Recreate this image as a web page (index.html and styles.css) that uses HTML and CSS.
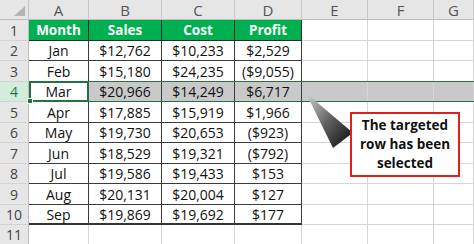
FILE: index.html
```html
<!DOCTYPE html>
<html>
<head>
<meta charset="utf-8">
<link rel="stylesheet" href="styles.css">
</head>
<body>
<div class="page">
  <div class="sheet">
    <div class="corner"><span class="tri"></span></div>
    <div class="ch">A</div><div class="ch">B</div><div class="ch">C</div><div class="ch">D</div><div class="ch">E</div><div class="ch">F</div><div class="ch">G</div>

    <div class="rh">1</div>
    <div class="g">Month</div><div class="g">Sales</div><div class="g">Cost</div><div class="g">Profit</div>
    <div class="e"></div><div class="e"></div><div class="e"></div>

    <div class="rh">2</div>
    <div class="t">Jan</div><div class="t">$12,762</div><div class="t">$10,233</div><div class="t">$2,529</div>
    <div class="e"></div><div class="e"></div><div class="e"></div>

    <div class="rh">3</div>
    <div class="t">Feb</div><div class="t">$15,180</div><div class="t">$24,235</div><div class="t">($9,055)</div>
    <div class="e"></div><div class="e"></div><div class="e"></div>

    <div class="rh rh-sel">4</div>
    <div class="t">Mar</div><div class="t sel">$20,966</div><div class="t sel">$14,249</div><div class="t sel">$6,717</div>
    <div class="e sel"></div><div class="e sel"></div><div class="e sel"></div>

    <div class="rh">5</div>
    <div class="t">Apr</div><div class="t">$17,885</div><div class="t">$15,919</div><div class="t">$1,966</div>
    <div class="e"></div><div class="e"></div><div class="e"></div>

    <div class="rh">6</div>
    <div class="t">May</div><div class="t">$19,730</div><div class="t">$20,653</div><div class="t">($923)</div>
    <div class="e"></div><div class="e"></div><div class="e"></div>

    <div class="rh">7</div>
    <div class="t">Jun</div><div class="t">$18,529</div><div class="t">$19,321</div><div class="t">($792)</div>
    <div class="e"></div><div class="e"></div><div class="e"></div>

    <div class="rh">8</div>
    <div class="t">Jul</div><div class="t">$19,586</div><div class="t">$19,433</div><div class="t">$153</div>
    <div class="e"></div><div class="e"></div><div class="e"></div>

    <div class="rh">9</div>
    <div class="t">Aug</div><div class="t">$20,131</div><div class="t">$20,004</div><div class="t">$127</div>
    <div class="e"></div><div class="e"></div><div class="e"></div>

    <div class="rh">10</div>
    <div class="t last">Sep</div><div class="t last">$19,869</div><div class="t last">$19,692</div><div class="t last">$177</div>
    <div class="e"></div><div class="e"></div><div class="e"></div>

    <div class="rh">11</div>
    <div class="e"></div><div class="e"></div><div class="e"></div><div class="e"></div>
    <div class="e"></div><div class="e"></div><div class="e"></div>

    <div class="row-outline"></div>
    <div class="active-cell"><span class="handle"></span></div>
  </div>

  <svg class="pointer" width="60" height="62" viewBox="0 0 60 62">
    <defs>
      <linearGradient id="pg" x1="0" y1="0" x2="1" y2="1">
        <stop offset="0" stop-color="#d4d4d4"/>
        <stop offset="0.5" stop-color="#606060"/>
        <stop offset="1" stop-color="#0a0a0a"/>
      </linearGradient>
    </defs>
    <polygon points="1,1 47,40 45,43 28,56 25,50" fill="url(#pg)"/>
  </svg>

  <div class="callout">The targeted<br>row has been<br>selected</div>
</div>
</body>
</html>
```

FILE: styles.css
```css
html, body {
  margin: 0;
  padding: 0;
  background: #fff;
}

.page {
  position: relative;
  width: 474px;
  height: 244px;
  overflow: hidden;
  font-family: "Open Sans", "Liberation Sans", sans-serif;
}

.sheet {
  position: relative;
  display: grid;
  grid-template-columns: 29px 60px 73px 73px 67px 66px 66px 40px;
  grid-template-rows: 20px 21px 20px 21px 20px 21px 20px 21px 20px 21px 20px 20px;
  width: 474px;
}

.corner {
  position: relative;
  background: #e6e6e6;
  border-right: 1px solid #c4c4c4;
  border-bottom: 1px solid #bdbdbd;
}

.tri {
  position: absolute;
  right: 3px;
  bottom: 3px;
  width: 0;
  height: 0;
  border-left: 11px solid transparent;
  border-bottom: 10px solid #b4b4b4;
}

.ch {
  background: #e6e6e6;
  color: #555;
  font-size: 15px;
  display: flex;
  align-items: center;
  justify-content: center;
  border-right: 1px solid #c8c8c8;
  border-bottom: 1px solid #bdbdbd;
}

.rh {
  background: #e6e6e6;
  color: #444;
  font-size: 14px;
  display: flex;
  align-items: center;
  justify-content: center;
  border-right: 1px solid #bdbdbd;
  border-bottom: 1px solid #d2d2d2;
}

.rh-sel {
  background: #d2eedb;
  color: #217346;
}

.g {
  background: #00b050;
  color: #fff;
  font-weight: bold;
  font-size: 13.5px;
  display: flex;
  align-items: center;
  justify-content: center;
  border-right: 1px solid #2a2a2a;
  border-bottom: 1px solid #2a2a2a;
}

.t {
  background: #fff;
  color: #111;
  font-size: 14px;
  display: flex;
  align-items: center;
  justify-content: center;
  border-right: 1px solid #3a3a3a;
  border-bottom: 1px solid #3a3a3a;
}

.t.last {
  border-bottom: 2px solid #333;
}

.e {
  border-right: 1px solid #d6d6d6;
  border-bottom: 1px solid #d6d6d6;
}

.sel {
  background: #c9c9c9;
}

.row-outline {
  position: absolute;
  grid-row: 5 / 6;
  grid-column: 2 / 9;
  top: -1px;
  left: 0;
  right: 0;
  bottom: 0;
  border-top: 1px solid #217346;
  border-bottom: 1px solid #217346;
  pointer-events: none;
}

.active-cell {
  position: absolute;
  grid-row: 5 / 6;
  grid-column: 2 / 3;
  top: -1px;
  left: 0;
  right: 0;
  bottom: 0;
  border: 2px solid #217346;
  pointer-events: none;
}

.handle {
  position: absolute;
  left: -4px;
  bottom: -4px;
  width: 4px;
  height: 4px;
  background: #217346;
  border: 1px solid #fff;
}

.pointer {
  position: absolute;
  left: 305px;
  top: 92px;
}

.callout {
  position: absolute;
  left: 350px;
  top: 112px;
  width: 106px;
  height: 61px;
  border: 2px solid #e41e1e;
  background: #fff;
  color: #111;
  font-weight: bold;
  font-size: 13.5px;
  line-height: 19px;
  text-align: center;
  display: flex;
  align-items: center;
  justify-content: center;
}
```
